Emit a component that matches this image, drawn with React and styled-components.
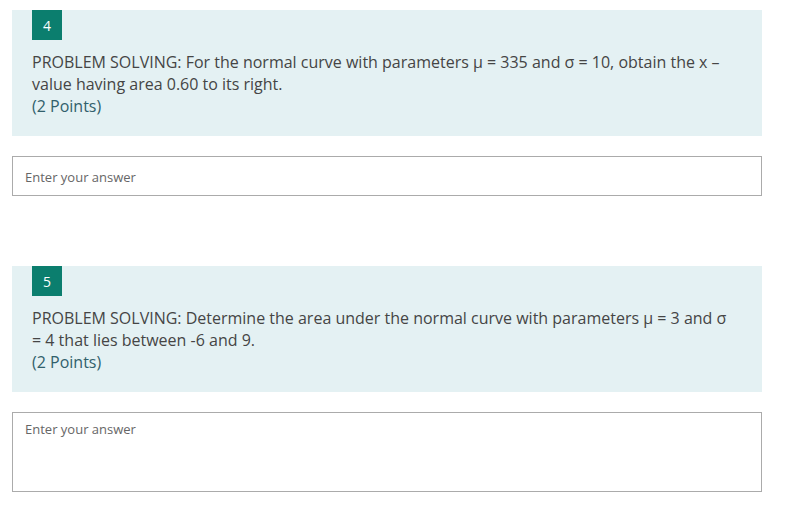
import React from "react";
import styled, { createGlobalStyle } from "styled-components";

const GlobalStyle = createGlobalStyle`
  body {
    margin: 0;
    background: #ffffff;
    font-family: "Open Sans", "Noto Sans", sans-serif;
  }
`;

const questions = [
  {
    number: 4,
    text: "PROBLEM SOLVING: For the normal curve with parameters μ = 335 and σ = 10, obtain the x – value having area 0.60 to its right.",
    points: 2,
    tall: false,
  },
  {
    number: 5,
    text: "PROBLEM SOLVING: Determine the area under the normal curve with parameters μ = 3 and σ = 4 that lies between -6 and 9.",
    points: 2,
    tall: true,
  },
];

export default function App() {
  return (
    <>
      <GlobalStyle />
      <Page>
        {questions.map((q) => (
          <Question key={q.number}>
            <QuestionPanel>
              <Badge>{q.number}</Badge>
              <Title>{q.text}</Title>
              <Points>({q.points} Points)</Points>
            </QuestionPanel>
            <AnswerBox $tall={q.tall} placeholder="Enter your answer" />
          </Question>
        ))}
      </Page>
    </>
  );
}

const Page = styled.main`
  display: flex;
  flex-direction: column;
  gap: 70px;
  padding: 10px 0 0 12px;
  width: 750px;
`;

const Question = styled.section`
  display: flex;
  flex-direction: column;
  gap: 20px;
`;

const QuestionPanel = styled.div`
  background: #e4f1f3;
  padding: 0 26px 19px 20px;
`;

const Badge = styled.div`
  width: 30px;
  height: 30px;
  background: #0b7e6e;
  color: #ffffff;
  font-size: 14px;
  display: flex;
  align-items: center;
  justify-content: center;
  margin-bottom: 11px;
`;

const Title = styled.div`
  color: #454545;
  font-size: 16px;
  line-height: 22px;
`;

const Points = styled.div`
  color: #31606b;
  font-size: 16px;
  line-height: 22px;
`;

const AnswerBox = styled.textarea`
  box-sizing: border-box;
  display: block;
  width: 750px;
  height: ${(p) => (p.$tall ? "80px" : "40px")};
  border: 1px solid #ababab;
  padding: ${(p) => (p.$tall ? "7px 12px" : "11px 12px")};
  font-family: inherit;
  font-size: 13px;
  line-height: 18px;
  resize: none;
  outline: none;
  overflow: hidden;
  margin: 0;

  &::placeholder {
    color: #666666;
  }
`;
